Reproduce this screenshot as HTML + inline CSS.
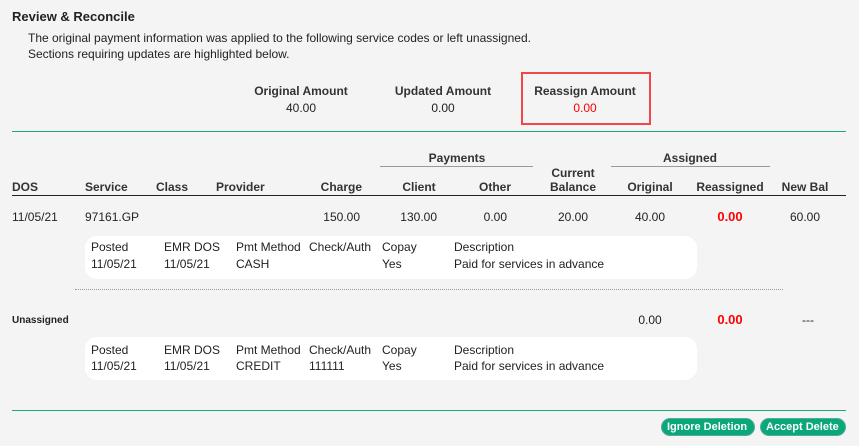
<!DOCTYPE html>
<html><head><meta charset="utf-8"><style>
*{margin:0;padding:0;box-sizing:border-box}
body{width:859px;height:446px;background:#f4f4f4;font-family:"Liberation Sans",Arial,sans-serif;font-size:12px;color:#222;position:relative;overflow:hidden}
.a{position:absolute;white-space:nowrap;line-height:14px}
.b{font-weight:bold;color:#333}
.c{transform:translateX(-50%)}
.r{transform:translateX(-100%)}
.red{color:#f00}
.line{position:absolute;height:1px}
.card{position:absolute;background:#fff;border-radius:12px}
.btn{position:absolute;top:418px;height:18px;background:#0aa77b;color:#fff;font-weight:bold;font-size:11px;line-height:16px;border:1px solid #5a9;border-radius:9px;padding:0 5px}
</style></head><body>
<div class="a b" style="left:12px;top:10px;font-size:13px;color:#222">Review &amp; Reconcile</div>
<div class="a" style="left:28px;top:31px">The original payment information was applied to the following service codes or left unassigned.</div>
<div class="a" style="left:28px;top:47px">Sections requiring updates are highlighted below.</div>

<div class="a b c" style="left:301px;top:84px">Original Amount</div>
<div class="a c" style="left:301px;top:101px">40.00</div>
<div class="a b c" style="left:443px;top:84px">Updated Amount</div>
<div class="a c" style="left:443px;top:101px">0.00</div>
<div style="position:absolute;left:521px;top:72px;width:130px;height:53px;border:2px solid #f04848"></div>
<div class="a b c" style="left:585px;top:84px">Reassign Amount</div>
<div class="a c red" style="left:585px;top:101px">0.00</div>
<div class="line" style="left:12px;top:131px;width:834px;background:#1aa886"></div>

<div class="a b c" style="left:457px;top:151px">Payments</div>
<div class="line" style="left:380px;top:166px;width:153px;background:#999"></div>
<div class="a b c" style="left:690px;top:151px">Assigned</div>
<div class="line" style="left:611px;top:166px;width:159px;background:#999"></div>
<div class="a b c" style="left:573px;top:166px">Current</div>
<div class="a b" style="left:12px;top:180px">DOS</div>
<div class="a b" style="left:85px;top:180px">Service</div>
<div class="a b" style="left:156px;top:180px">Class</div>
<div class="a b" style="left:216px;top:180px">Provider</div>
<div class="a b r" style="left:362px;top:180px">Charge</div>
<div class="a b c" style="left:419px;top:180px">Client</div>
<div class="a b c" style="left:495px;top:180px">Other</div>
<div class="a b c" style="left:573px;top:180px">Balance</div>
<div class="a b c" style="left:650px;top:180px">Original</div>
<div class="a b c" style="left:730px;top:180px">Reassigned</div>
<div class="a b c" style="left:805px;top:180px">New Bal</div>
<div class="line" style="left:12px;top:195px;width:834px;background:#222"></div>

<div class="a" style="left:12px;top:210px">11/05/21</div>
<div class="a" style="left:85px;top:210px">97161.GP</div>
<div class="a r" style="left:360px;top:210px">150.00</div>
<div class="a r" style="left:437px;top:210px">130.00</div>
<div class="a r" style="left:507px;top:210px">0.00</div>
<div class="a c" style="left:573px;top:210px">20.00</div>
<div class="a c" style="left:650px;top:210px">40.00</div>
<div class="a c red" style="left:730px;top:210px;font-weight:bold;font-size:13px">0.00</div>
<div class="a c" style="left:805px;top:210px">60.00</div>

<div class="card" style="left:85px;top:236px;width:612px;height:43px"></div>
<div class="a" style="left:91px;top:240px">Posted</div><div class="a" style="left:91px;top:257px">11/05/21</div>
<div class="a" style="left:164px;top:240px">EMR DOS</div><div class="a" style="left:164px;top:257px">11/05/21</div>
<div class="a" style="left:236px;top:240px">Pmt Method</div><div class="a" style="left:236px;top:257px">CASH</div>
<div class="a" style="left:309px;top:240px">Check/Auth</div>
<div class="a" style="left:382px;top:240px">Copay</div><div class="a" style="left:382px;top:257px">Yes</div>
<div class="a" style="left:454px;top:240px">Description</div><div class="a" style="left:454px;top:257px">Paid for services in advance</div>
<div style="position:absolute;left:75px;top:289px;width:708px;border-top:1px dotted #999"></div>

<div class="a b" style="left:12px;top:314px;font-size:10px;color:#222">Unassigned</div>
<div class="a c" style="left:650px;top:313px">0.00</div>
<div class="a c red" style="left:730px;top:313px;font-weight:bold;font-size:13px">0.00</div>
<div class="a c" style="left:808px;top:313px">---</div>

<div class="card" style="left:85px;top:337px;width:612px;height:43px"></div>
<div class="a" style="left:91px;top:343px">Posted</div><div class="a" style="left:91px;top:359px">11/05/21</div>
<div class="a" style="left:164px;top:343px">EMR DOS</div><div class="a" style="left:164px;top:359px">11/05/21</div>
<div class="a" style="left:236px;top:343px">Pmt Method</div><div class="a" style="left:236px;top:359px">CREDIT</div>
<div class="a" style="left:309px;top:343px">Check/Auth</div><div class="a" style="left:309px;top:359px">111111</div>
<div class="a" style="left:382px;top:343px">Copay</div><div class="a" style="left:382px;top:359px">Yes</div>
<div class="a" style="left:454px;top:343px">Description</div><div class="a" style="left:454px;top:359px">Paid for services in advance</div>

<div class="line" style="left:12px;top:410px;width:834px;background:#1aa886"></div>
<div class="btn" style="left:661px;width:94px">Ignore Deletion</div>
<div class="btn" style="left:760px;width:86px">Accept Delete</div>
</body></html>
